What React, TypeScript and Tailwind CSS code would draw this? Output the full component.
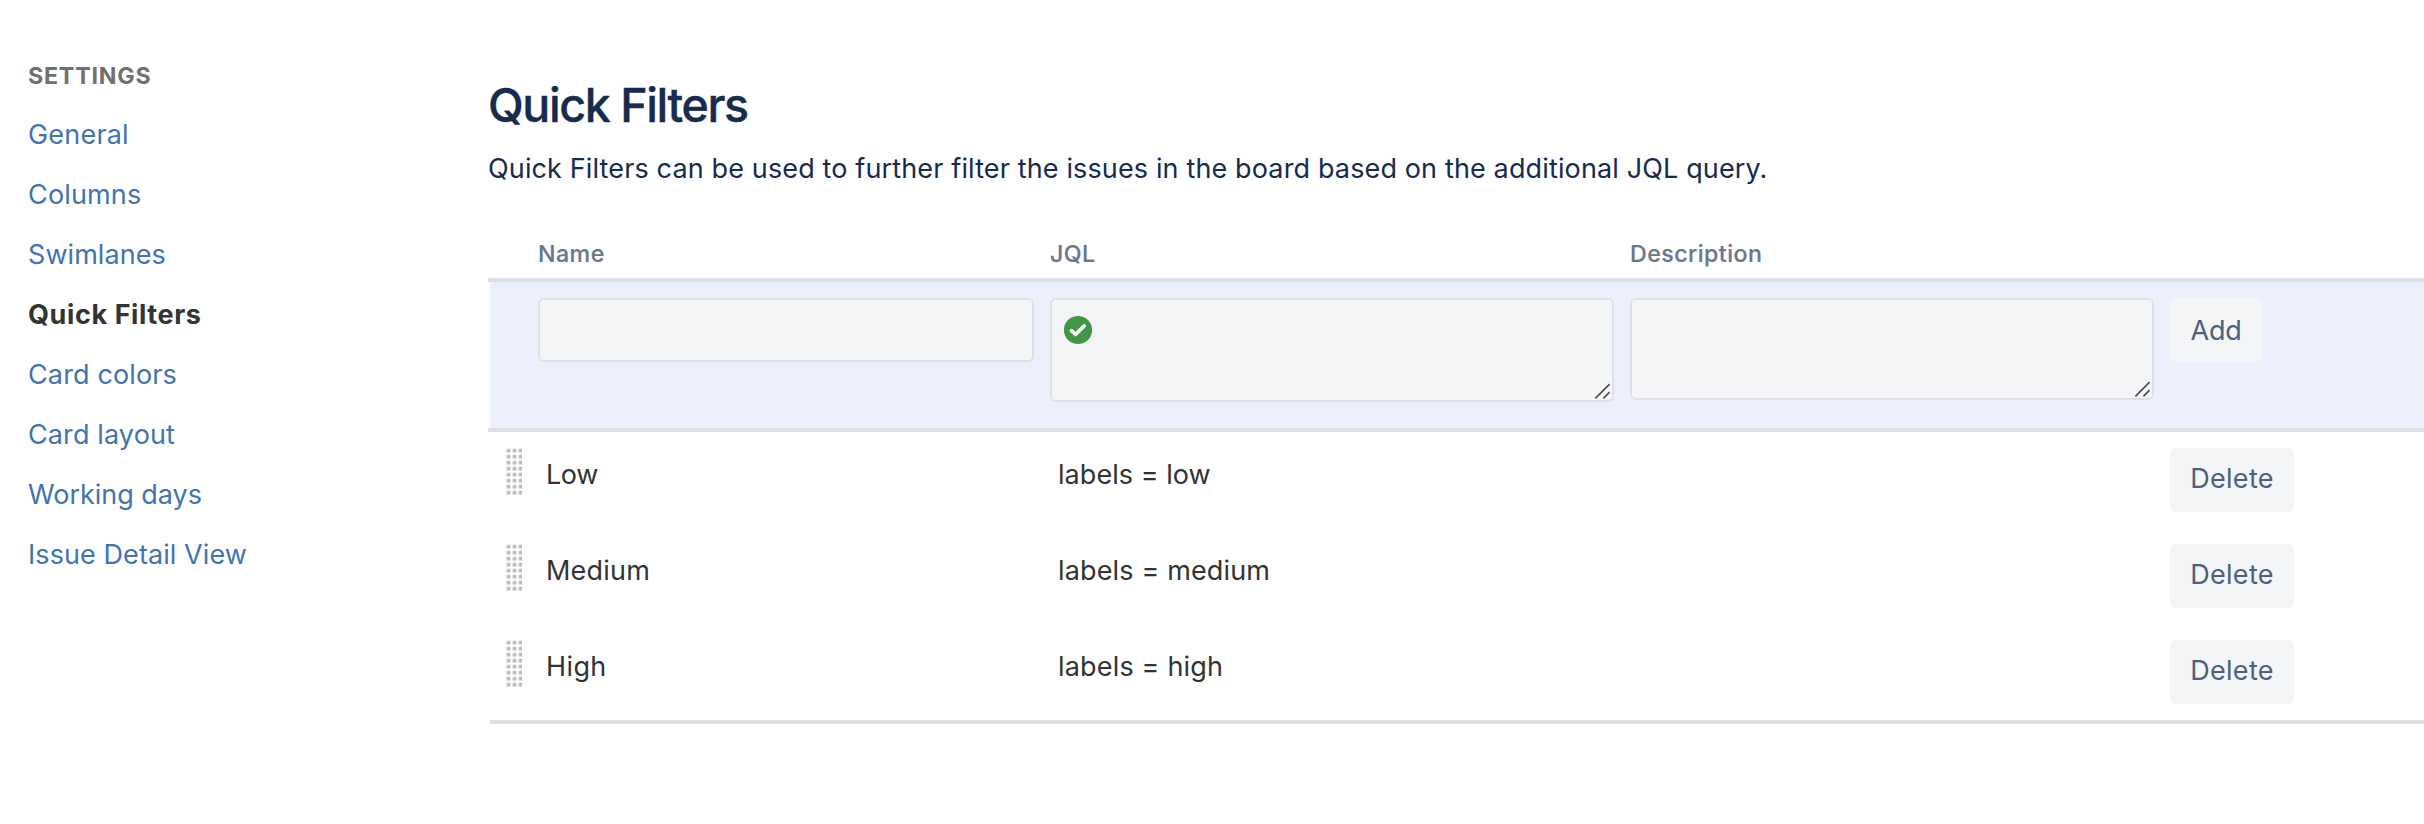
const links = [
  { label: 'General', tracking: 'tracking-[0.2px]' },
  { label: 'Columns', tracking: 'tracking-[0.16px]' },
  { label: 'Swimlanes', tracking: 'tracking-[0.06px]' },
  { label: 'Quick Filters', tracking: 'tracking-[0.6px]', active: true },
  { label: 'Card colors', tracking: 'tracking-[0.13px]' },
  { label: 'Card layout', tracking: 'tracking-[0.12px]' },
  { label: 'Working days', tracking: 'tracking-[-0.02px]' },
  { label: 'Issue Detail View', tracking: 'tracking-[0.08px]' },
];

const filters = [
  { name: 'Low', jql: 'labels = low', tracking: 'tracking-[-0.4px]', jqlTracking: 'tracking-[0.05px]' },
  { name: 'Medium', jql: 'labels = medium', tracking: 'tracking-[0.2px]', jqlTracking: 'tracking-[0.15px]' },
  { name: 'High', jql: 'labels = high', tracking: 'tracking-[0.4px]', jqlTracking: 'tracking-[0.18px]' },
];

const columns = 'grid grid-cols-[50px_512px_580px_540px_1fr]';

function Grip() {
  return (
    <svg className="absolute right-0 bottom-0" width="20" height="20" viewBox="0 0 20 20" fill="none">
      <path d="M5 18 19 4M13 18l6-6" stroke="#fff" strokeOpacity="0.7" strokeWidth="1.4" />
      <path d="M3.4 18.4 17.6 4.2M11.4 18.4l6.2-6.2" stroke="#4d4d4d" strokeWidth="1.7" />
    </svg>
  );
}

function CheckCircle() {
  return (
    <svg width="30" height="30" viewBox="0 0 30 30" fill="none">
      <circle cx="15" cy="15" r="14.1" fill="#429747" />
      <path d="m8.4 15.6 4.3 3.7 8.5-8.4" stroke="#fff" strokeWidth="3.6" strokeLinecap="round" strokeLinejoin="round" />
    </svg>
  );
}

function DragHandle() {
  return (
    <svg className="ml-[18px] mt-4" width="16" height="48" viewBox="0 0 16 48">
      {[0, 1, 2, 3, 4, 5, 6, 7].map((row) =>
        [0, 1, 2].map((col) => (
          <g key={`${row}-${col}`}>
            <rect x={col * 6} y={row * 6 + 0.2} width="4.8" height="4.8" rx="1.6" fill="#e2e2e2" />
            <circle cx={2.7 + col * 6} cy={2.7 + row * 6} r="1.6" fill="#bababa" />
          </g>
        )),
      )}
    </svg>
  );
}

export default function App() {
  return (
    <div className="flex h-[824px] w-[2424px] overflow-hidden bg-white font-['Inter',sans-serif] text-[27px] text-[#333]">
      <nav className="w-[488px] shrink-0 pl-7 pt-14">
        <h2 className="text-[23.2px] leading-10 font-bold tracking-[0.8px] text-[#707070]">SETTINGS</h2>
        <ul className="mt-[9px]">
          {links.map((l) => (
            <li key={l.label} className={`h-[60px] leading-[60px] ${l.tracking}`}>
              <a className={l.active ? 'font-bold text-[#333]' : 'text-[#4274ae]'}>{l.label}</a>
            </li>
          ))}
        </ul>
      </nav>

      <main className="min-w-0 grow pt-[77px]">
        <h1 className="text-[46.5px] leading-[56px] font-medium tracking-[-1.4px] text-[#172b4d] [-webkit-text-stroke:0.4px_#172b4d]">
          Quick Filters
        </h1>
        <p className="mt-4 leading-10 tracking-[0.135px] text-[#172b4d]">
          Quick Filters can be used to further filter the issues in the board based on the additional JQL query.
        </p>

        <div className="mt-[49px]">
          <div
            className={`${columns} border-b-4 border-[#dfe0e6] pb-2 text-[23.2px] leading-8 font-medium tracking-[0.45px] text-[#6b778c] [-webkit-text-stroke:0.2px_#6b778c]`}
          >
            <span />
            <span>Name</span>
            <span>JQL</span>
            <span>Description</span>
            <span />
          </div>

          <div className="border-b-4 border-[#dfe0e6]">
            <div className={`${columns} h-[146px] items-start bg-[linear-gradient(to_right,#fff_2px,#ebf0fc_2px)] pt-4`}>
              <span />
              <div className="mr-4 h-16 rounded-md border-2 border-[#dfe1e6] bg-[#f4f5f7]" />
              <div className="relative mr-4 h-[104px] rounded-md border-2 border-[#dfe1e6] bg-[#f4f5f7] pt-[15px] pl-[11px]">
                <CheckCircle />
                <Grip />
              </div>
              <div className="relative mr-4 h-[102px] rounded-md border-2 border-[#dfe1e6] bg-[#f4f5f7]">
                <Grip />
              </div>
              <button className="h-16 w-[92px] rounded-md bg-[#f4f5f7] pt-0.5 tracking-[-0.3px] text-[#505f79]">
                Add
              </button>
            </div>
          </div>

          <div className="ml-0.5 border-b-4 border-[#dfe0e6]">
            {filters.map((f) => (
              <div key={f.name} className={`${columns} -ml-0.5 h-24 items-start`}>
                <DragHandle />
                <span className={`pt-[23px] pl-2 leading-10 ${f.tracking}`}>{f.name}</span>
                <span className={`pt-[23px] pl-2 leading-10 ${f.jqlTracking}`}>{f.jql}</span>
                <span />
                <button className="mt-4 h-16 w-[124px] rounded-md bg-[#f4f5f7] pb-0.5 tracking-[0.3px] text-[#505f79]">
                  Delete
                </button>
              </div>
            ))}
          </div>
        </div>
      </main>
    </div>
  );
}
